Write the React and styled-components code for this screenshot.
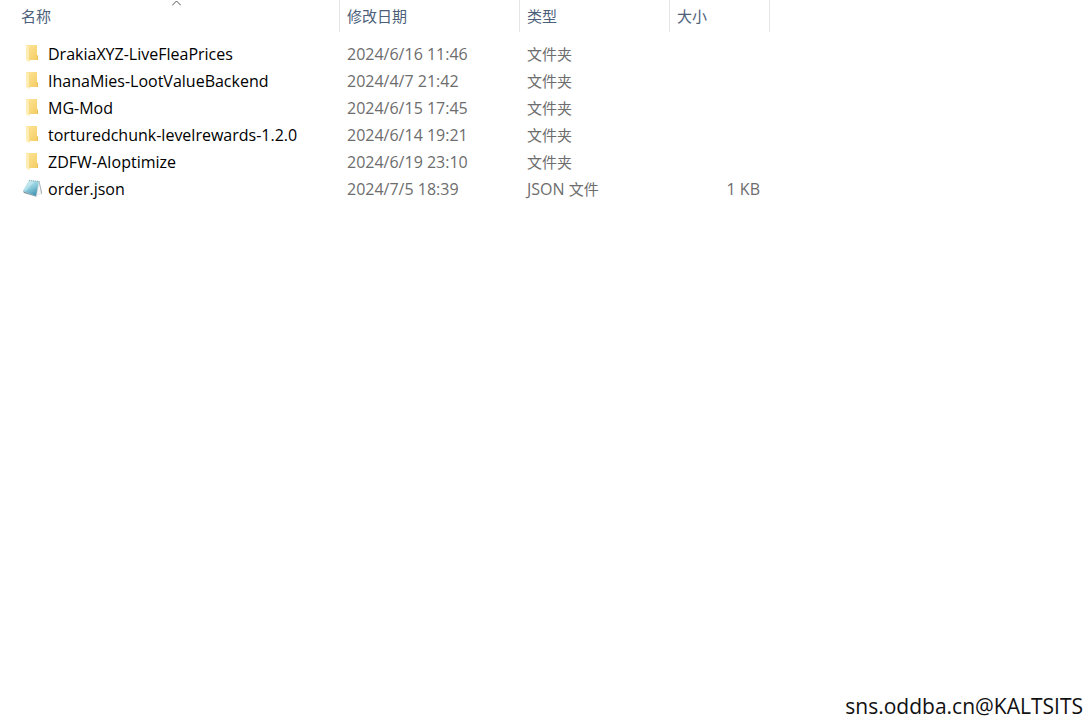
import styled, { createGlobalStyle } from "styled-components";

const GlobalStyle = createGlobalStyle`
  * {
    box-sizing: border-box;
  }

  body {
    margin: 0;
    background: #ffffff;
    font-family: "Open Sans", "Noto Sans CJK SC", sans-serif;
  }
`

const Page = styled.main`
  display: flex;
  flex-direction: column;
  justify-content: space-between;
  min-height: 100vh;
`

const FileTable = styled.table`
  table-layout: fixed;
  width: 770px;
  max-width: 100%;
  border-collapse: separate;
  border-spacing: 0;
`

const Column = styled.col`
  width: ${(props) => props.$width}px;
`

const HeaderCell = styled.th`
  height: 32px;
  padding: 0;
  border-right: 1px solid #e5e5e5;
  font-weight: 400;
`

const HeaderButton = styled.button`
  position: relative;
  display: block;
  width: 100%;
  height: 32px;
  padding: 0 7px;
  padding-left: ${(props) => (props.$first ? 21 : 7)}px;
  border: none;
  background: none;
  color: #4c607a;
  font-family: inherit;
  font-size: 15px;
  line-height: 32px;
  text-align: left;
`

const SortArrow = styled.svg`
  position: absolute;
  top: 0;
  left: 51%;
  width: 9px;
  height: 7px;
  margin-left: -1px;
`

const FileList = styled.tbody`
  &::before {
    content: "";
    display: block;
    height: 9px;
  }
`

const Cell = styled.td`
  height: 27px;
  padding: 0 10px 0 7px;
  color: #6d6d6d;
  font-size: ${(props) => (props.$cjk ? 15 : 16)}px;
  line-height: 27px;
  text-align: ${(props) => props.$align || "left"};
  white-space: nowrap;
`

const NameCell = styled(Cell)`
  padding-left: 22px;
  color: #000000;
`

const FileName = styled.div`
  display: flex;
  align-items: center;
  gap: 6px;
`

const Icon = styled.svg`
  flex: none;
  width: 20px;
  height: 19px;
`

const Latin = styled.span`
  font-size: 16px;
`

const Watermark = styled.footer`
  padding: 0 8px 5px;
  color: #111111;
  font-size: 21px;
  line-height: 32px;
  text-align: right;
`

const files = [
  { name: "DrakiaXYZ-LiveFleaPrices", date: "2024/6/16 11:46", type: "文件夹", folder: true },
  { name: "IhanaMies-LootValueBackend", date: "2024/4/7 21:42", type: "文件夹", folder: true },
  { name: "MG-Mod", date: "2024/6/15 17:45", type: "文件夹", folder: true },
  { name: "torturedchunk-levelrewards-1.2.0", date: "2024/6/14 19:21", type: "文件夹", folder: true },
  { name: "ZDFW-AIoptimize", date: "2024/6/19 23:10", type: "文件夹", folder: true },
  { name: "order.json", date: "2024/7/5 18:39", format: "JSON", type: "文件", size: "1 KB" },
]

const columns = [
  { label: "名称", width: 340, sorted: true },
  { label: "修改日期", width: 180 },
  { label: "类型", width: 150 },
  { label: "大小", width: 100 },
]

const FolderIcon = () => (
  <Icon viewBox="0 0 20 19" aria-hidden="true">
    <defs>
      <linearGradient id="folder-back" x1="0" y1="0" x2="1" y2="1">
        <stop offset="0" stopColor="#ffe69a" />
        <stop offset="1" stopColor="#f3cc62" />
      </linearGradient>
    </defs>
    <path d="M4 0h11v10l1 1v4H4z" fill="url(#folder-back)" />
    <path d="M15 10l1 1v4h-1z" fill="#e9c05a" />
    <path d="M4 0l4 2v12l-1 3-3-2z" fill="#ffedb3" />
    <path d="M7 2h1v12l-1 3z" fill="#f8da83" />
  </Icon>
)

const NotepadIcon = () => (
  <Icon viewBox="0 0 20 19" aria-hidden="true">
    <defs>
      <linearGradient id="note-cover" x1="0.2" y1="0" x2="0.7" y2="1">
        <stop offset="0" stopColor="#cdeff4" />
        <stop offset="0.5" stopColor="#8ccbdc" />
        <stop offset="1" stopColor="#3c8fae" />
      </linearGradient>
    </defs>
    <path d="M17 1l3 13-4 1-2 1z" fill="#c9cfd2" />
    <path d="M17 2l2 12-4 1z" fill="#f5f7f7" />
    <path d="M1 11l13 5 1 1-13-4z" fill="#7e949c" />
    <path d="M7 0l10 1-3 15L1 11z" fill="url(#note-cover)" />
    <path d="M7 1l5 1-8 9-3-1z" fill="#dff6f8" opacity="0.4" />
    <path d="M7 0.5l10 1" stroke="#9ab0b6" strokeDasharray="1 1" />
    <path d="M17 1l3 13" fill="none" stroke="#84939a" strokeWidth="0.6" />
  </Icon>
)

const App = () => {
  return (
    <>
      <GlobalStyle />
      <Page>
        <FileTable>
          <colgroup>
            {columns.map((column) => (
              <Column key={column.label} $width={column.width} />
            ))}
          </colgroup>
          <thead>
            <tr>
              {columns.map((column) => (
                <HeaderCell key={column.label} scope="col" aria-sort={column.sorted ? "ascending" : undefined}>
                  <HeaderButton type="button" $first={column.sorted}>
                    {column.label}
                    {column.sorted && (
                      <SortArrow viewBox="0 0 9 7" aria-hidden="true">
                        <path d="M0 5.5L4.5 1L9 5.5" fill="none" stroke="#555555" />
                      </SortArrow>
                    )}
                  </HeaderButton>
                </HeaderCell>
              ))}
            </tr>
          </thead>
          <FileList>
            {files.map((file) => (
              <tr key={file.name}>
                <NameCell>
                  <FileName>
                    {file.folder ? <FolderIcon /> : <NotepadIcon />}
                    <span>{file.name}</span>
                  </FileName>
                </NameCell>
                <Cell>{file.date}</Cell>
                <Cell $cjk>
                  {file.format && <Latin>{file.format} </Latin>}
                  {file.type}
                </Cell>
                <Cell $align="right">{file.size}</Cell>
              </tr>
            ))}
          </FileList>
        </FileTable>
        <Watermark>sns.oddba.cn@KALTSITS</Watermark>
      </Page>
    </>
  )
}

export default App;
